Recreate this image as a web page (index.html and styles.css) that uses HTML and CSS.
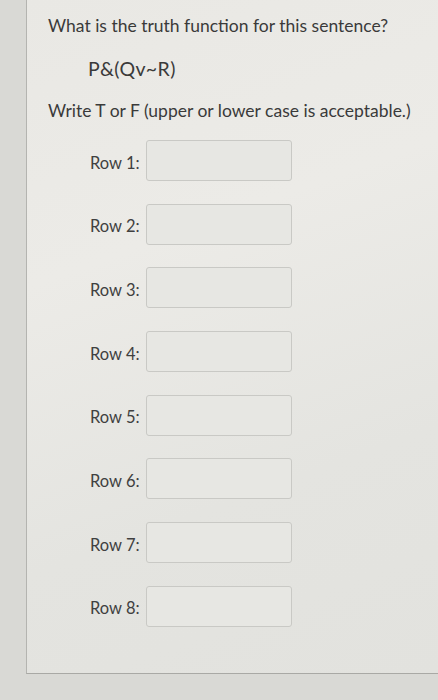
FILE: index.html
```html
<!DOCTYPE html>
<html>
<head>
<meta charset="utf-8">
<link rel="stylesheet" href="styles.css">
</head>
<body>
<div class="panel">
  <p class="question">What is the truth function for this sentence?</p>
  <p class="formula">P&amp;(Qv~R)</p>
  <p class="instruction">Write T or F (upper or lower case is acceptable.)</p>
  <div class="rows">
    <div class="row"><label class="row-label">Row 1:</label><input class="answer" type="text"></div>
    <div class="row"><label class="row-label">Row 2:</label><input class="answer" type="text"></div>
    <div class="row"><label class="row-label">Row 3:</label><input class="answer" type="text"></div>
    <div class="row"><label class="row-label">Row 4:</label><input class="answer" type="text"></div>
    <div class="row"><label class="row-label">Row 5:</label><input class="answer" type="text"></div>
    <div class="row"><label class="row-label">Row 6:</label><input class="answer" type="text"></div>
    <div class="row"><label class="row-label">Row 7:</label><input class="answer" type="text"></div>
    <div class="row"><label class="row-label">Row 8:</label><input class="answer" type="text"></div>
  </div>
</div>
</body>
</html>
```

FILE: styles.css
```css
html, body {
  margin: 0;
  padding: 0;
}
body {
  background: #d9d9d5;
  font-family: Lato, "Noto Sans", sans-serif;
  color: #3a3a3a;
  height: 700px;
  overflow: hidden;
}
.panel {
  margin-left: 26px;
  border-left: 1px solid #b4b4b0;
  border-bottom: 1px solid #a9a9a5;
  background: linear-gradient(160deg, #e9e8e4 0%, #ecebe7 35%, #e4e4e0 70%, #e2e2de 100%);
  padding: 16px 0 0 21px;
  height: 657px;
}
.question, .formula, .instruction {
  margin: 0;
  font-size: 17.5px;
  line-height: 20px;
}
.formula {
  margin-top: 23px;
  padding-left: 40px;
  font-size: 19.5px;
  letter-spacing: 0.4px;
}
.instruction {
  margin-top: 22px;
}
.rows {
  margin-top: 19px;
  padding-left: 42px;
  display: flex;
  flex-direction: column;
  gap: 22.7px;
}
.row {
  display: flex;
  align-items: center;
}
.row-label {
  font-size: 16.5px;
  line-height: 20px;
  padding-top: 4px;
  color: #404040;
}
.answer {
  margin-left: 6px;
  width: 146px;
  height: 41px;
  box-sizing: border-box;
  border: 1px solid #c9c9c5;
  border-radius: 3px;
  background: #e7e7e3;
  padding: 0;
}
```
